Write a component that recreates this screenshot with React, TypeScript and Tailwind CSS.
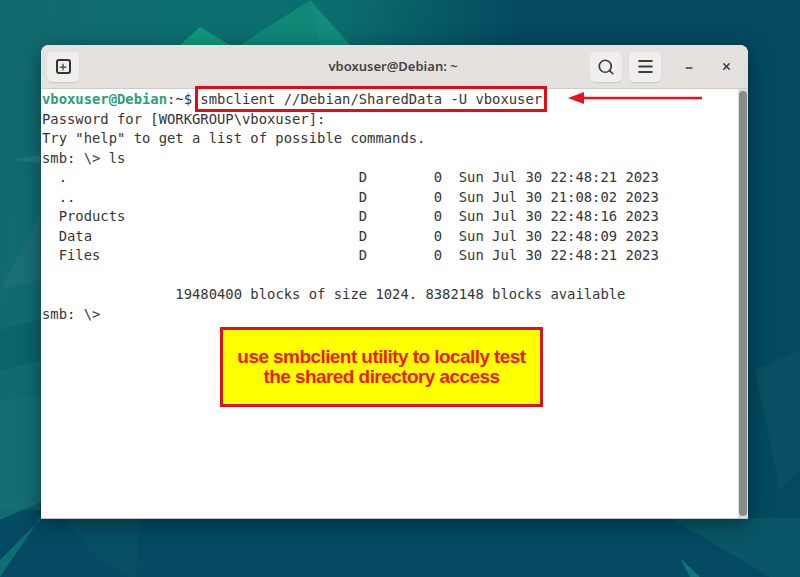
import { Menu, Minus, Plus, Search, X } from "lucide-react";

const mono = "font-['DejaVu_Sans_Mono','Liberation_Mono',monospace]";

const outputLines = [
  "Password for [WORKGROUP\\vboxuser]:",
  'Try "help" to get a list of possible commands.',
  "smb: \\> ls",
  "  .                                   D        0  Sun Jul 30 22:48:21 2023",
  "  ..                                  D        0  Sun Jul 30 21:08:02 2023",
  "  Products                            D        0  Sun Jul 30 22:48:16 2023",
  "  Data                                D        0  Sun Jul 30 22:48:09 2023",
  "  Files                               D        0  Sun Jul 30 22:48:21 2023",
  "",
  "\t\t19480400 blocks of size 1024. 8382148 blocks available",
  "smb: \\>",
];

function Wallpaper() {
  return (
    <svg
      className="absolute inset-0 h-full w-full"
      viewBox="0 0 800 577"
      preserveAspectRatio="none"
    >
      <defs>
        <linearGradient id="wall" x1="0" y1="0" x2="1" y2="0.12">
          <stop offset="0" stopColor="#12696f" />
          <stop offset="0.25" stopColor="#0c6f70" />
          <stop offset="0.42" stopColor="#0b6d6d" />
          <stop offset="0.65" stopColor="#03495f" />
          <stop offset="1" stopColor="#034a60" />
        </linearGradient>
      </defs>
      <rect width="800" height="577" fill="url(#wall)" />
      <polygon points="0,577 0,520 45,500 60,515 800,515 800,577" fill="#034a62" />
      <polygon points="180,45 200,27 230,45" fill="#0f9a7e" />
      <polygon points="240,45 310,0 350,45" fill="#0f8878" />
      <polygon points="310,0 320,45 350,45" fill="#129080" opacity="0.7" />
      <polygon points="0,290 40,215 40,280" fill="#2f7783" opacity="0.35" />
      <polygon points="0,330 40,320 40,360 0,370" fill="#0a6069" opacity="0.7" />
      <polygon points="0,400 40,395 40,510 0,510" fill="#1b7478" opacity="0.4" />
      <polygon points="12,160 40,155 40,163" fill="#3c8c8e" opacity="0.4" />
      <polygon points="0,577 0,560 40,520 40,518" fill="#0d6f72" />
      <polygon points="60,518 140,518 136,582 100,560" fill="#0f5a6a" opacity="0.35" />
      <polygon points="755,370 800,350 800,470 780,490" fill="#175a6c" opacity="0.4" />
      <polygon points="670,518 800,518 800,577 770,577" fill="#0b5b69" opacity="0.7" />
      <polygon points="680,558 700,577 690,577" fill="#0f7577" />
    </svg>
  );
}

function HeaderButton({ children }: { children: React.ReactNode }) {
  return (
    <button
      type="button"
      className="flex h-[30px] w-[32px] items-center justify-center rounded-[5px] bg-[#f0efed] text-[#3d3d3d] shadow-[0_1px_1px_rgba(0,0,0,0.12)]"
    >
      {children}
    </button>
  );
}

export default function App() {
  return (
    <div className="relative h-[577px] w-[800px] overflow-hidden pl-[41px] pt-[45px]">
      <Wallpaper />

      <div className="relative flex h-[474px] w-[707px] flex-col overflow-hidden rounded-t-[8px] border-b border-[#b4c6ca] bg-white shadow-[0_4px_22px_rgba(0,0,0,0.4)]">
        <header className="grid h-[44px] shrink-0 grid-cols-[1fr_auto_1fr] items-center border-b border-[#d0cdc9] bg-[#e4e1de] pl-[6px] pr-[9px]">
          <div>
            <HeaderButton>
              <span className="flex h-[15px] w-[15px] items-center justify-center rounded-[3px] border-[2px] border-[#333]">
                <Plus size={10} strokeWidth={3} />
              </span>
            </HeaderButton>
          </div>
          <div className="text-center font-['Noto_Sans',sans-serif] text-[13px] font-semibold text-[#444]">
            vboxuser@Debian: ~
          </div>
          <div className="flex items-center justify-end gap-[7px]">
            <HeaderButton>
              <Search size={18} strokeWidth={2.3} />
            </HeaderButton>
            <HeaderButton>
              <Menu size={19} strokeWidth={2.4} />
            </HeaderButton>
            <span className="ml-[5px] flex w-[32px] justify-center pt-[3px] text-[#3d3d3d]">
              <Minus size={10} strokeWidth={3.2} />
            </span>
            <span className="ml-[1px] flex w-[26px] justify-center text-[#3d3d3d]">
              <X size={11} strokeWidth={3.4} />
            </span>
          </div>
        </header>

        <div className="flex min-h-0 flex-1">
          <div
            className={`flex-1 overflow-hidden whitespace-pre pl-px pt-[1px] text-[13.85px] leading-[19.5px] text-[#363636] ${mono}`}
          >
            <div>
              <span className="font-bold text-[#2aa17a]">vboxuser@Debian</span>
              :~$ smbclient //Debian/SharedData -U vboxuser
            </div>
            {outputLines.map((line, i) => (
              <div key={i} className="h-[19.5px] [tab-size:8]">
                {line}
              </div>
            ))}
          </div>
          <div className="flex w-[10px] shrink-0 justify-center bg-[#dcdcdc] py-[2px]">
            <div className="w-[8px] rounded-full bg-[#8a8c8c]" />
          </div>
        </div>
      </div>

      {/* annotations drawn on top of the screenshot */}
      <div className="absolute left-[195px] top-[86px] h-[26px] w-[352px] border-[3px] border-[#e00d17]" />
      <svg className="absolute left-[565px] top-[90px]" width="140" height="16" viewBox="0 0 140 16">
        <polygon points="3,8 19,2 19,6.8 137,6.8 137,9.2 19,9.2 19,14" fill="#e9131b" />
      </svg>
      <div className="absolute left-[220px] top-[327px] flex h-[80px] w-[323px] items-center justify-center border-[3px] border-[#d8141c] bg-[#ffff00] text-center font-['Liberation_Sans',Arial,sans-serif] text-[19px] font-bold leading-[20px] tracking-[-0.57px] text-[#f01a05]">
        use smbclient utility to locally test
        <br />
        the shared directory access
      </div>
    </div>
  );
}
